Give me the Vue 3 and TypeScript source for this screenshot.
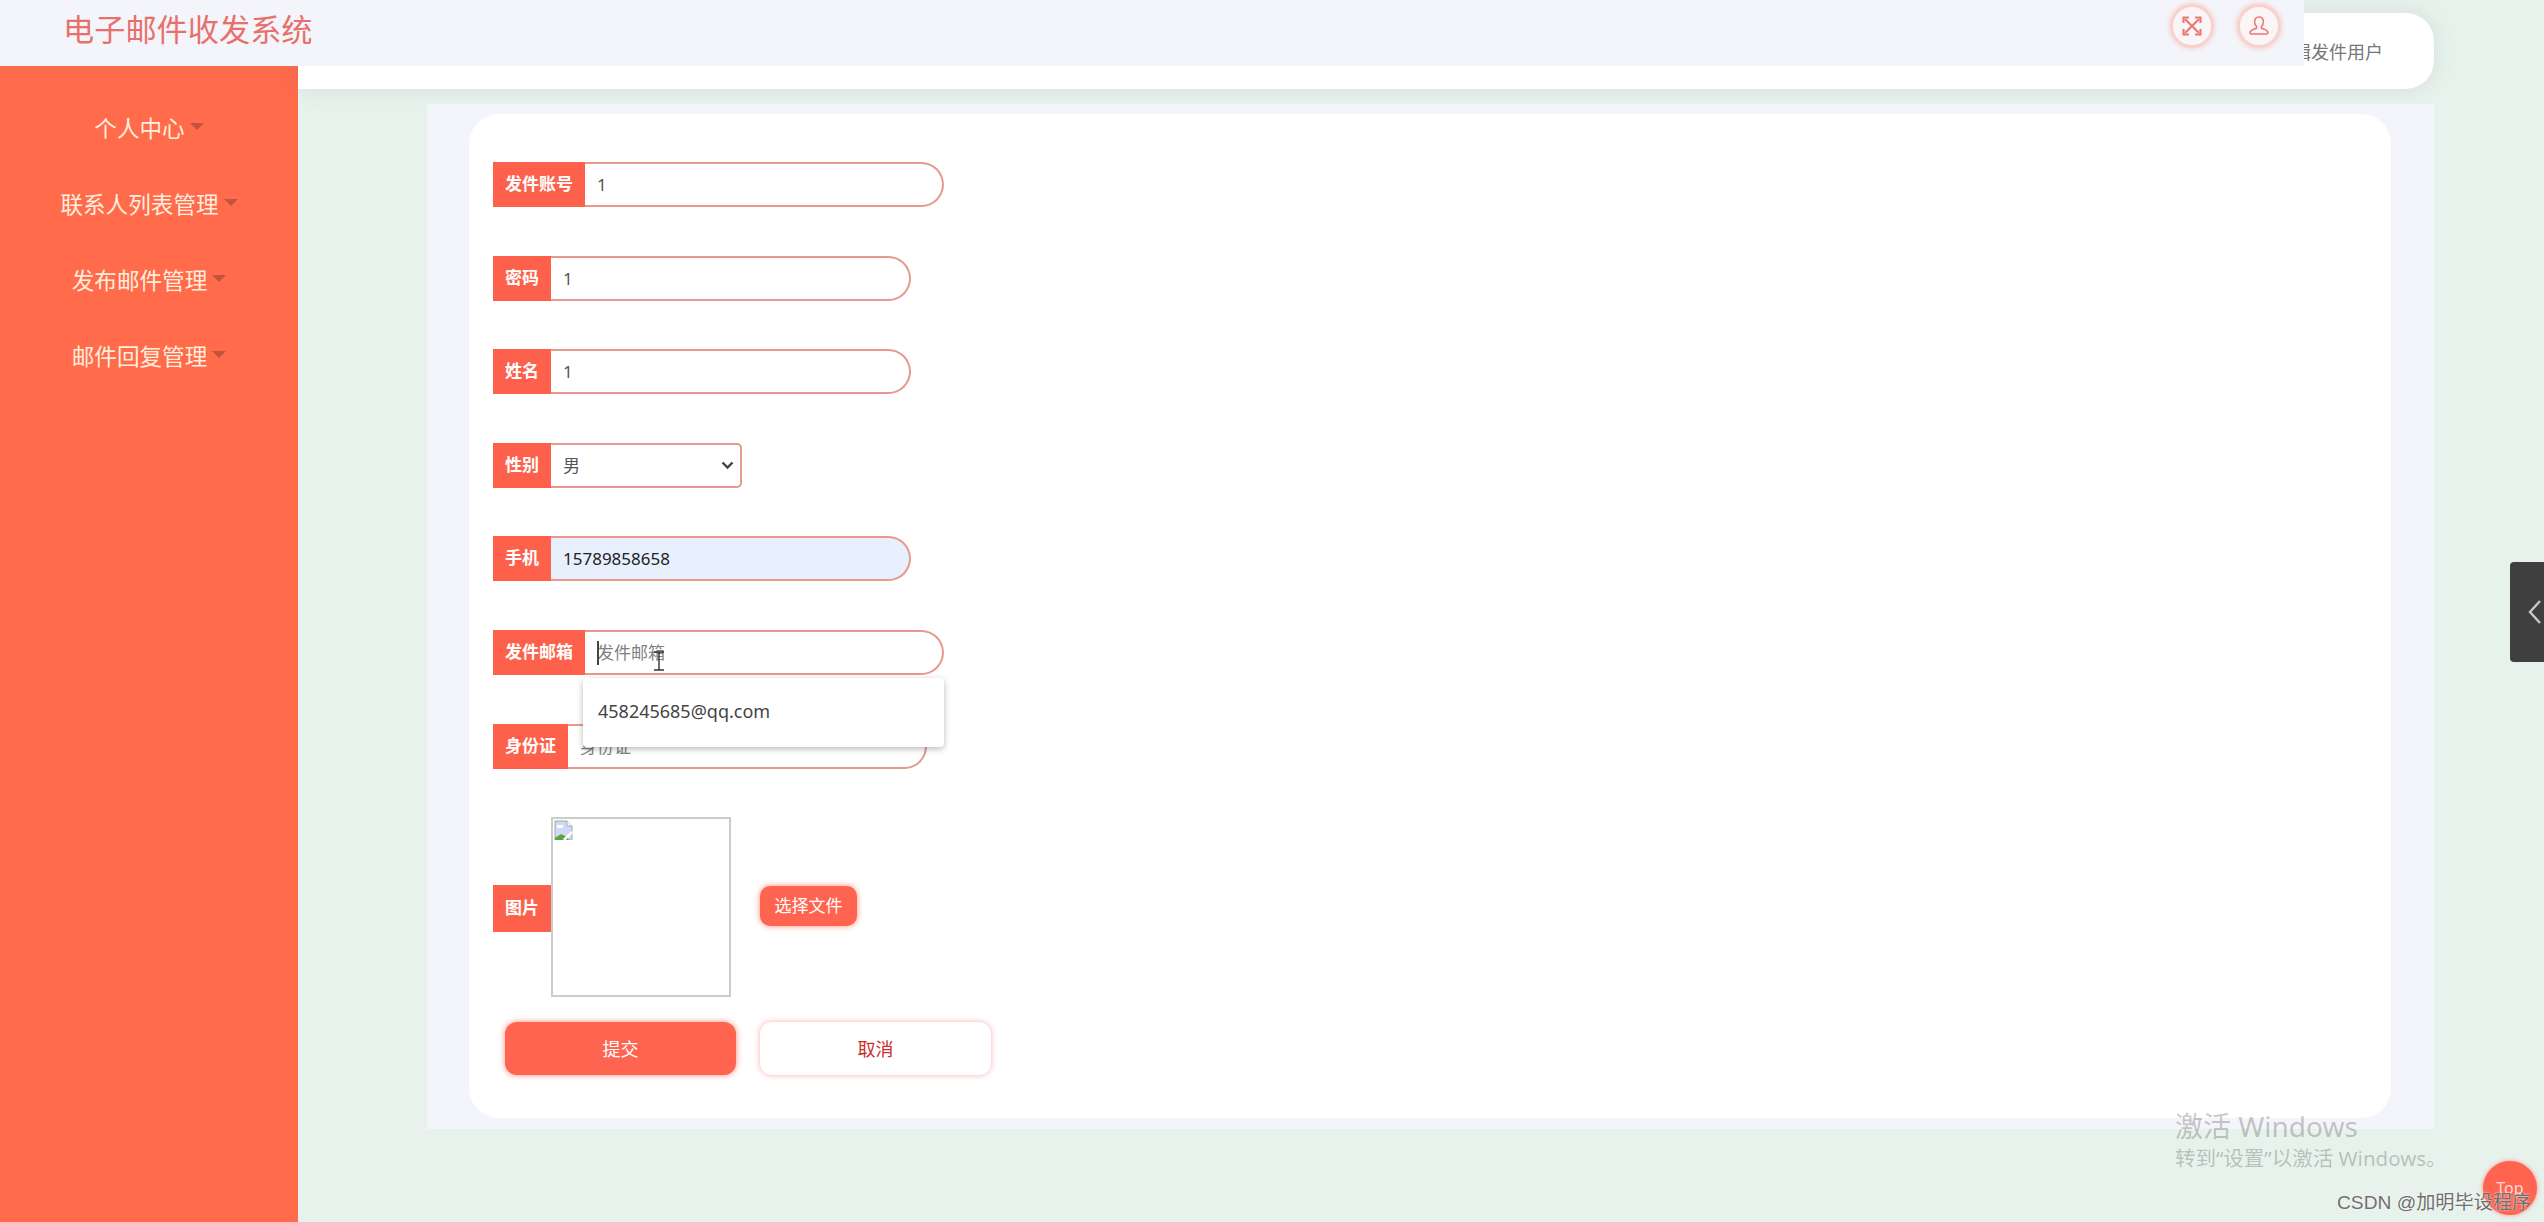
<script setup lang="ts">
interface Field {
  label: string
  value?: string
  placeholder?: string
  wide: number
  autofill?: boolean
}

const menus: string[] = ['个人中心', '联系人列表管理', '发布邮件管理', '邮件回复管理']

const before: Field[] = [
  { label: '发件账号', value: '1', wide: 359 },
  { label: '密码', value: '1', wide: 360 },
  { label: '姓名', value: '1', wide: 360 }
]
const after: Field[] = [{ label: '手机', value: '15789858658', wide: 360, autofill: true }]
</script>

<template>
  <div class="page">
    <header class="head">
      <div class="title">电子邮件收发系统</div>
      <div class="head-tools">
        <span class="round">
          <svg width="24" height="24" viewBox="0 0 24 24" fill="none" stroke="#ec7a72" stroke-width="2.200">
            <path d="M5 5l14 14M19 5L5 19" />
            <path d="M3.500 9V3.500H9M15 3.500h5.500V9M20.500 15v5.500H15M9 20.500H3.500V15" />
          </svg>
        </span>
        <span class="round">
          <svg width="24" height="24" viewBox="0 0 24 24" fill="none" stroke="#ec7a72" stroke-width="1.600">
            <path d="M12 3c-2.800 0-4.400 2-4.400 4.700 0 2.100.9 3.600 1.900 4.600v1.900c-1.800 1-5.400 1.600-6.200 3.400-.4 1 0 2.400 1 2.400h15.400c1 0 1.400-1.400 1-2.400-.8-1.800-4.400-2.400-6.200-3.400v-1.900c1-1 1.900-2.500 1.900-4.600C16.400 5 14.800 3 12 3z" />
          </svg>
        </span>
      </div>
    </header>

    <aside class="side">
      <div v-for="m in menus" :key="m" class="menu">
        <span>{{ m }}</span><i class="caret"></i>
      </div>
    </aside>

    <main class="main">
      <div class="topbar"><span class="crumb">编辑发件用户</span></div>
      <section class="panel">
        <form class="card">
          <div v-for="f in before" :key="f.label" class="row">
            <label class="lab">{{ f.label }}</label>
            <input class="inp" :style="{ width: f.wide + 'px' }" :value="f.value" />
          </div>

          <div class="row">
            <label class="lab">性别</label>
            <select class="sel">
              <option>男</option>
              <option>女</option>
            </select>
          </div>

          <div v-for="f in after" :key="f.label" class="row">
            <label class="lab">{{ f.label }}</label>
            <input class="inp fill" :style="{ width: f.wide + 'px' }" :value="f.value" />
          </div>

          <div class="row mail">
            <label class="lab">发件邮箱</label>
            <input class="inp" style="width: 359px" placeholder="发件邮箱" />
            <i class="text-caret"></i>
            <svg class="ibeam" width="12" height="20" viewBox="0 0 12 20" fill="none" stroke="#333" stroke-width="1.400">
              <path d="M1 1h10M6 1v18M1 19h10" />
            </svg>
            <div class="suggest">458245685@qq.com</div>
          </div>

          <div class="row">
            <label class="lab">身份证</label>
            <input class="inp" style="width: 359px" placeholder="身份证" />
          </div>

          <div class="row pic">
            <label class="lab">图片</label>
            <div class="thumb">
              <svg width="19" height="20" viewBox="0 0 19 20">
                <path d="M1 1h12l5 5v14H1z" fill="#cdd9f6" stroke="#a9a9a9" />
                <path d="M13 1v5h5" fill="#fff" stroke="#a9a9a9" />
                <path d="M3 5h6v3H3z" fill="#fff" />
                <path d="M1 20v-2l6-4 6 3 2 3z" fill="#5aa645" />
                <path d="M10 20l8-8" stroke="#fff" stroke-width="2.500" />
              </svg>
            </div>
            <button type="button" class="choose">选择文件</button>
          </div>

          <div class="actions">
            <button type="button" class="btn primary">提交</button>
            <button type="button" class="btn ghost">取消</button>
          </div>
        </form>
      </section>
    </main>

    <div class="dock">
      <svg width="14" height="26" viewBox="0 0 14 26" fill="none" stroke="#c8c8c8" stroke-width="2.400">
        <path d="M12 2L2 13l10 11" />
      </svg>
    </div>
    <div class="activate">
      <div class="a1">激活 Windows</div>
      <div class="a2">转到“设置”以激活 Windows。</div>
    </div>
    <div class="to-top">Top</div>
    <div class="mark">CSDN @加明毕设程序</div>
  </div>
</template>

<style>
html,
body {
  margin: 0;
  background: #e7f2ec;
}
</style>

<style scoped>
.page {
  position: relative;
  display: flex;
  width: 2544px;
  height: 1222px;
  overflow: hidden;
  background: #e7f2ec;
  font-family: "Noto Sans", "Noto Sans CJK SC", sans-serif;
  color: #333;
}
.head {
  position: absolute;
  z-index: 3;
  top: 0;
  left: 0;
  display: flex;
  align-items: center;
  justify-content: space-between;
  box-sizing: border-box;
  width: 2304px;
  height: 66px;
  padding: 0 24px 0 63px;
  background: #f4f5fa;
}
.title {
  margin-top: -8px;
  font-size: 31.200px;
  line-height: 50px;
  color: #e8706a;
}
.head-tools {
  display: flex;
  gap: 25px;
  margin-top: -15px;
}
.round {
  display: flex;
  align-items: center;
  justify-content: center;
  box-sizing: border-box;
  width: 42px;
  height: 42px;
  border: 2px solid #fbd0cb;
  border-radius: 50%;
  background: #faf5f6;
  box-shadow: 0 0 6px #f6a9a2;
}
.side {
  flex: none;
  box-sizing: border-box;
  width: 298px;
  margin-top: 66px;
  padding-top: 23px;
  background: #ff6b4b;
}
.menu {
  display: flex;
  align-items: center;
  justify-content: center;
  height: 76px;
  font-size: 22.600px;
  color: #ffeedd;
}
.caret {
  width: 0;
  height: 0;
  margin: -2px 0 0 5px;
  border-top: 7px solid #c0553b;
  border-left: 7px solid transparent;
  border-right: 7px solid transparent;
}
.main {
  flex: none;
  width: 2136px;
  padding-top: 13px;
}
.topbar {
  display: flex;
  align-items: center;
  justify-content: flex-end;
  box-sizing: border-box;
  height: 76px;
  padding: 0 51px 0 0;
  border-radius: 0 28px 28px 0;
  background: #fff;
  box-shadow: 0 0 22px rgba(90, 100, 110, 0.13);
}
.crumb {
  margin-top: -1px;
  font-size: 18px;
  color: #777;
}
.panel {
  box-sizing: border-box;
  height: 1025px;
  margin: 15px 0 0 129px;
  padding: 10px 43px 11px 42px;
  background: #f4f5fa;
}
.card {
  box-sizing: border-box;
  height: 100%;
  padding: 48px 24px 0;
  border-radius: 30px;
  background: #fff;
}
.row {
  position: relative;
  display: flex;
  height: 45px;
  margin-bottom: 48.600px;
}
.lab {
  display: flex;
  flex: none;
  align-items: center;
  box-sizing: border-box;
  padding: 0 12px 4px;
  background: #fe614b;
  font-size: 17px;
  font-weight: 700;
  color: #fff;
}
.inp {
  box-sizing: border-box;
  height: 45px;
  padding: 0 12px;
  border: 2px solid #e59a8c;
  border-left: 0;
  border-radius: 0 23px 23px 0;
  outline: none;
  background: #fff;
  font: 17px "Noto Sans", "Noto Sans CJK SC", sans-serif;
  color: #555;
}
.inp::placeholder {
  color: #808080;
}
.fill {
  background: #e8f0fe;
  color: #222;
}
.sel {
  box-sizing: border-box;
  width: 191px;
  height: 45px;
  padding: 0 12px;
  border: 2px solid #e59a8c;
  border-left: 0;
  border-radius: 0 5px 5px 0;
  outline: none;
  appearance: none;
  background: #fff url("data:image/svg+xml,%3Csvg xmlns='http://www.w3.org/2000/svg' viewBox='0 0 13 9'%3E%3Cpath d='M1.500 1.500l5 5 5-5' fill='none' stroke='%23444' stroke-width='2.400'/%3E%3C/svg%3E") no-repeat right 6px center / 13px 9px;
  font: 17px "Noto Sans", "Noto Sans CJK SC", sans-serif;
  color: #555;
}
.text-caret {
  position: absolute;
  top: 11px;
  left: 104px;
  width: 1.500px;
  height: 24px;
  background: #444;
}
.ibeam {
  position: absolute;
  top: 21px;
  left: 160px;
}
.suggest {
  position: absolute;
  z-index: 2;
  top: 48px;
  left: 90px;
  display: flex;
  align-items: center;
  box-sizing: border-box;
  width: 361px;
  height: 69px;
  padding: 0 0 2px 15px;
  border-radius: 4px;
  background: #fff;
  box-shadow: 0 2px 6px rgba(0, 0, 0, 0.28);
  font-size: 18px;
  color: #444;
}
.pic {
  align-items: center;
  height: 180px;
  margin-bottom: 25px;
}
.pic .lab {
  height: 47px;
  margin-top: 3px;
}
.thumb {
  box-sizing: border-box;
  width: 180px;
  height: 180px;
  padding: 1px 0 0 1px;
  border: 2px solid #ccc;
  background: #fff;
}
.thumb svg {
  display: block;
}
.choose {
  width: 97px;
  height: 40px;
  margin: -3px 0 0 29px;
  padding: 0 0 2px;
  border: 0;
  border-radius: 10px;
  background: #ff6450;
  box-shadow: 0 0 6px #ff8c7c;
  font: 17px "Noto Sans CJK SC", sans-serif;
  color: #fff;
}
.actions {
  display: flex;
  gap: 24px;
  padding-left: 12px;
}
.btn {
  width: 231px;
  height: 53px;
  padding: 0 0 2px;
  border-radius: 12px;
  font: 18px "Noto Sans CJK SC", sans-serif;
}
.primary {
  border: 0;
  background: #ff6450;
  box-shadow: 0 0 6px #ff8c7c;
  color: #fff;
}
.ghost {
  border: 0;
  background: #fff;
  box-shadow: 0 0 6px #f9aeb0;
  color: #c9302c;
}
.dock {
  position: absolute;
  top: 562px;
  right: 0;
  display: flex;
  align-items: center;
  justify-content: flex-end;
  box-sizing: border-box;
  width: 34px;
  height: 100px;
  padding-right: 2px;
  border-radius: 4px 0 0 4px;
  background: #3f3f3f;
}
.activate {
  position: absolute;
  z-index: 4;
  top: 1108px;
  left: 2175px;
  color: rgba(70, 70, 70, 0.3);
}
.a1 {
  font-size: 28px;
  line-height: 36px;
}
.a2 {
  font-size: 20.500px;
  line-height: 28px;
}
.to-top {
  position: absolute;
  top: 1161px;
  left: 2483px;
  display: flex;
  align-items: center;
  justify-content: center;
  width: 54px;
  height: 54px;
  border-radius: 50%;
  background: #ff6450;
  box-shadow: 0 0 4px #ff8c7c;
  font-size: 16px;
  color: #ffd9d4;
}
.mark {
  position: absolute;
  z-index: 5;
  top: 1190px;
  left: 2337px;
  font-family: "Liberation Sans", "Noto Sans CJK SC", sans-serif;
  font-size: 19.200px;
  line-height: 26px;
  white-space: nowrap;
  color: #6f6f6f;
  text-shadow: 0 0 2px #fff;
}
</style>
